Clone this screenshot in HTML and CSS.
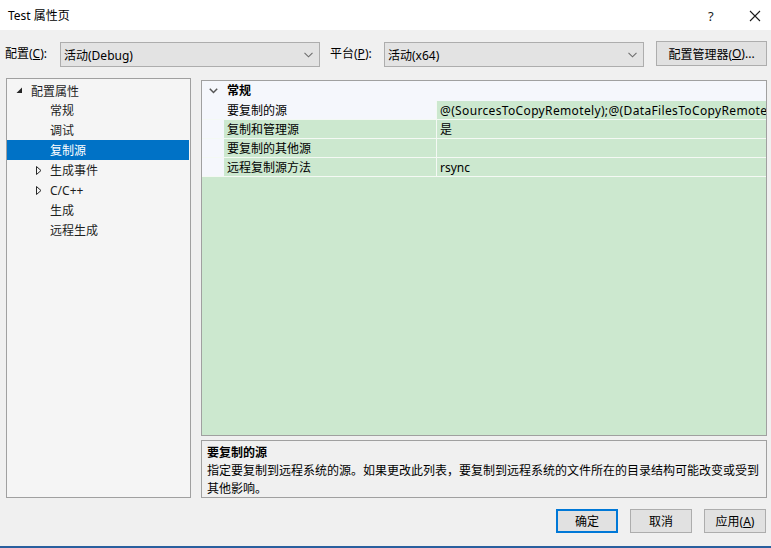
FILE: index.html
```html
<!DOCTYPE html>
<html lang="zh-CN">

<head>
    <meta charset="UTF-8">
    <title>Test 属性页</title>
    <link rel="stylesheet" href="styles.css">
</head>

<body>
    <div class="dialog">
        <!-- 标题栏 -->
        <div class="titlebar">
            <span class="title">Test 属性页</span>
            <span class="help">?</span>
            <svg class="close" width="12" height="12" viewBox="0 0 12 12">
                <path d="M1 1 L11 11 M11 1 L1 11" stroke="#1b1b1b" stroke-width="1.1" fill="none" />
            </svg>
        </div>

        <!-- 配置 / 平台 -->
        <div class="toolbar">
            <span class="lbl lbl-cfg">配置(<u>C</u>):</span>
            <div class="combo">
                <span>活动(Debug)</span>
                <svg class="caret" width="9" height="6" viewBox="0 0 9 6">
                    <path d="M0.5 0.8 L4.5 4.8 L8.5 0.8" stroke="#6d6d6d" stroke-width="1.1" fill="none" />
                </svg>
            </div>
            <span class="lbl lbl-plat">平台(<u>P</u>):</span>
            <div class="combo">
                <span>活动(x64)</span>
                <svg class="caret" width="9" height="6" viewBox="0 0 9 6">
                    <path d="M0.5 0.8 L4.5 4.8 L8.5 0.8" stroke="#6d6d6d" stroke-width="1.1" fill="none" />
                </svg>
            </div>
            <div class="btn btn-mgr">配置管理器(<u>O</u>)...</div>
        </div>

        <div class="main">
            <!-- 左侧树 -->
            <ul class="tree">
                <li class="node root">
                    <span class="arrow">
                        <svg width="7" height="7" viewBox="0 0 7 7"><polygon points="6,0.5 6,6 0.5,6" fill="#262626" /></svg>
                    </span>配置属性
                </li>
                <li class="node child"><span class="arrow"></span>常规</li>
                <li class="node child"><span class="arrow"></span>调试</li>
                <li class="node child active"><span class="arrow"></span>复制源</li>
                <li class="node child">
                    <span class="arrow">
                        <svg width="6" height="9" viewBox="0 0 6 9"><polygon points="0.5,0.5 5,4.5 0.5,8.5" fill="none" stroke="#262626" stroke-width="1" /></svg>
                    </span>生成事件
                </li>
                <li class="node child">
                    <span class="arrow">
                        <svg width="6" height="9" viewBox="0 0 6 9"><polygon points="0.5,0.5 5,4.5 0.5,8.5" fill="none" stroke="#262626" stroke-width="1" /></svg>
                    </span>C/C++
                </li>
                <li class="node child"><span class="arrow"></span>生成</li>
                <li class="node child"><span class="arrow"></span>远程生成</li>
            </ul>

            <div class="side">
                <!-- 属性表 -->
                <div class="grid">
                    <div class="grow ghead">
                        <span class="gind">
                            <svg width="9" height="6" viewBox="0 0 9 6">
                                <path d="M0.8 0.8 L4.5 4.5 L8.2 0.8" stroke="#555" stroke-width="1.5" fill="none" />
                            </svg>
                        </span>
                        <span class="gcat">常规</span>
                    </div>
                    <div class="grow sel">
                        <span class="gind"></span>
                        <span class="gname">要复制的源</span>
                        <span class="gval gval-long">@(SourcesToCopyRemotely);@(DataFilesToCopyRemotely)</span>
                    </div>
                    <div class="grow">
                        <span class="gind"></span>
                        <span class="gname">复制和管理源</span>
                        <span class="gval">是</span>
                    </div>
                    <div class="grow">
                        <span class="gind"></span>
                        <span class="gname">要复制的其他源</span>
                        <span class="gval"></span>
                    </div>
                    <div class="grow">
                        <span class="gind"></span>
                        <span class="gname">远程复制源方法</span>
                        <span class="gval">rsync</span>
                    </div>
                </div>

                <!-- 说明 -->
                <div class="desc">
                    <div class="desc-title">要复制的源</div>
                    <div class="desc-text">指定要复制到远程系统的源。如果更改此列表，要复制到远程系统的文件所在的目录结构可能改变或受到<br>其他影响。</div>
                </div>
            </div>
        </div>

        <div class="footer">
            <div class="btn btn-def">确定</div>
            <div class="btn">取消</div>
            <div class="btn">应用(<u>A</u>)</div>
        </div>

        <div class="edge"></div>
    </div>
</body>

</html>
```

FILE: styles.css
```css
html,
body {
    margin: 0;
    padding: 0;
    background-color: #f0f0f0;
}

.dialog {
    width: 771px;
    height: 548px;
    display: flex;
    flex-direction: column;
    font-family: "Noto Sans", "Noto Sans CJK SC", sans-serif;
    font-size: 12px;
    color: #000;
    overflow: hidden;
}

u {
    text-decoration: underline;
    text-underline-offset: 1px;
}

/* 标题栏 */
.titlebar {
    height: 30px;
    background-color: #fff;
    display: flex;
    align-items: center;
    padding-left: 8px;
    padding-top: 1px;
    box-sizing: border-box;
}

.title {
    flex: 1;
    line-height: 16px;
}

.help {
    width: 12px;
    margin-right: 29px;
    font-size: 13px;
    color: #1b1b1b;
}

.close {
    margin-right: 10px;
}

/* 工具栏 */
.toolbar {
    display: flex;
    align-items: flex-start;
    margin-top: 11px;
    height: 26px;
}

.lbl {
    line-height: 26px;
    box-sizing: border-box;
}

.lbl-cfg {
    width: 60px;
    padding-left: 5px;
}

.lbl-plat {
    width: 64px;
    padding-left: 10px;
}

.combo {
    width: 260px;
    height: 25px;
    margin-top: 1px;
    box-sizing: border-box;
    border: 1px solid #adadad;
    background-color: #e3e3e3;
    display: flex;
    align-items: center;
    padding: 0 6px 0 3px;
}

.combo span {
    flex: 1;
}

.btn {
    height: 24px;
    width: 62px;
    box-sizing: border-box;
    border: 1px solid #adadad;
    background-color: #e1e1e1;
    display: flex;
    align-items: center;
    justify-content: center;
}

.btn-mgr {
    width: 111px;
    height: 25px;
    margin-left: 12px;
}

.btn-def {
    border: 2px solid #0078d7;
}

/* 主体 */
.main {
    display: flex;
    margin-top: 11px;
    padding-left: 6px;
    height: 420px;
}

.tree {
    list-style: none;
    margin: 0;
    padding: 1px 1px 0 0;
    width: 185px;
    height: 420px;
    box-sizing: border-box;
    border: 1px solid #a0a0a0;
    background-color: #f5f5f5;
}

.node {
    height: 20px;
    display: flex;
    align-items: center;
    color: #1e1e1e;
}

.root {
    padding-top: 1px;
    box-sizing: border-box;
}

.arrow {
    display: flex;
    align-items: center;
}

.root {
    padding-left: 9px;
}

.root .arrow {
    width: 15px;
}

.child {
    padding-left: 29px;
}

.child .arrow {
    width: 14px;
}

.active {
    background-color: #0072c6;
    color: #fff;
}

.side {
    margin-left: 10px;
    width: 566px;
    display: flex;
    flex-direction: column;
}

/* 属性表 */
.grid {
    margin-top: 2px;
    height: 357px;
    box-sizing: border-box;
    border: 1px solid #a0a0a0;
    background-color: #cce8cf;
}

.grow {
    display: flex;
    height: 19px;
    box-sizing: border-box;
    border-bottom: 1px solid #f4f9f4;
    line-height: 20px;
}

.ghead {
    height: 20px;
    background-color: #f5f7fc;
    border-bottom: none;
}

.gind {
    width: 22px;
    flex: none;
    background-color: #f5f7fc;
    display: flex;
    align-items: center;
    justify-content: center;
}

.gcat {
    padding-left: 3px;
    font-weight: bold;
}

.gname {
    width: 213px;
    flex: none;
    box-sizing: border-box;
    padding-left: 3px;
    border-right: 1px solid #f4f9f4;
}

.sel .gname {
    background-color: #f5f7fc;
}

.gval {
    flex: 1;
    padding-left: 3px;
    white-space: nowrap;
    overflow: hidden;
}

.gval-long {
    letter-spacing: 0.35px;
}

/* 说明 */
.desc {
    margin-top: 4px;
    height: 58px;
    box-sizing: border-box;
    border: 1px solid #a0a0a0;
    padding: 3px 5px 0;
    line-height: 18px;
}

.desc-title {
    font-weight: bold;
}

/* 按钮 */
.footer {
    display: flex;
    justify-content: flex-end;
    gap: 12px;
    margin-top: 11px;
    padding-right: 5px;
}

.edge {
    margin-top: auto;
    height: 2px;
    background-color: #2a5f9e;
}
```
